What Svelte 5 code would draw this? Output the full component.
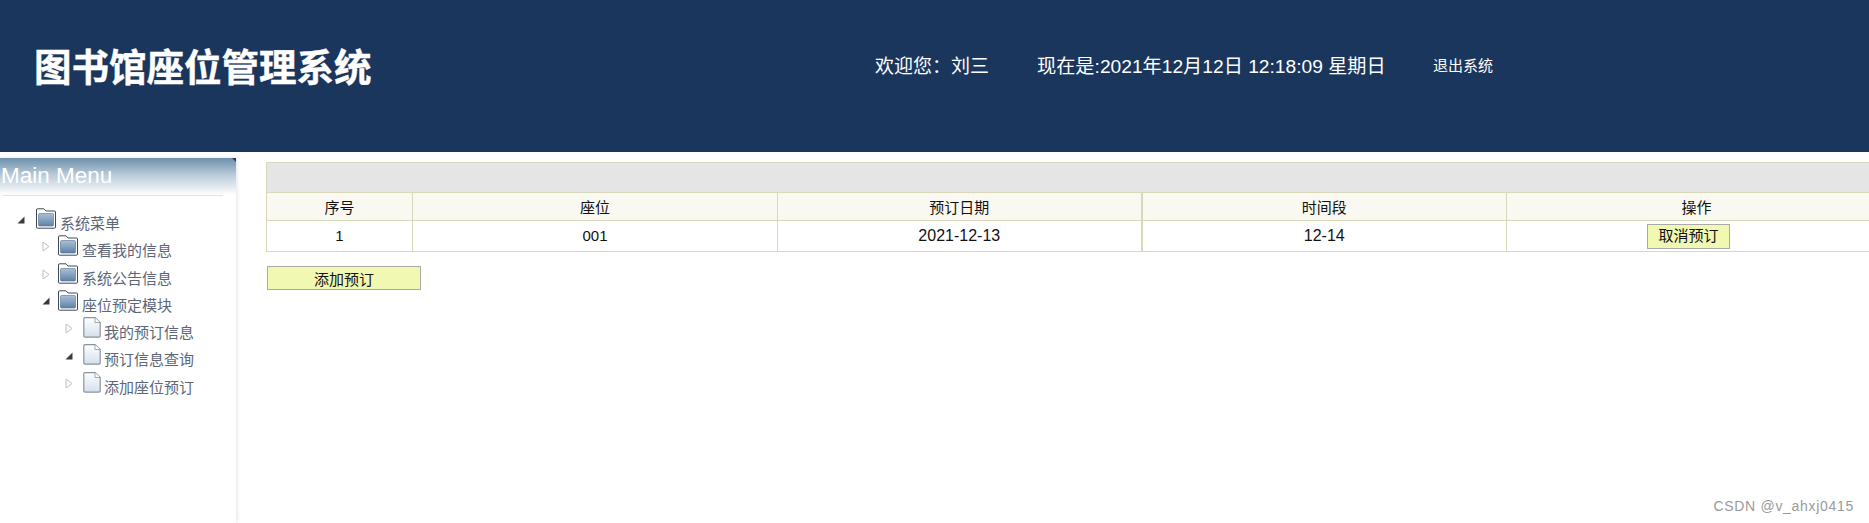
<script>
  const tree = [
    { label: '系统菜单', level: 0, open: true, icon: 'folder' },
    { label: '查看我的信息', level: 1, open: false, icon: 'folder' },
    { label: '系统公告信息', level: 1, open: false, icon: 'folder' },
    { label: '座位预定模块', level: 1, open: true, icon: 'folder' },
    { label: '我的预订信息', level: 2, open: false, icon: 'file' },
    { label: '预订信息查询', level: 2, open: true, icon: 'file' },
    { label: '添加座位预订', level: 2, open: false, icon: 'file' }
  ];

  const columns = ['序号', '座位', '预订日期', '时间段', '操作'];
  const rows = [{ id: 1, seat: '001', date: '2021-12-13', time: '12-14' }];
</script>

<div class="page">
  <header class="top">
    <h1>图书馆座位管理系统</h1>
    <span class="welcome">欢迎您：刘三</span>
    <span class="clock">现在是:2021年12月12日 12:18:09 星期日</span>
    <a class="logout" href="#top">退出系统</a>
  </header>

  <div class="body">
    <aside class="side">
      <div class="side-title">Main Menu</div>
      <div class="rule"></div>
      <ul class="tree">
        {#each tree as node}
          <li class="node level-{node.level}">
            <span class="arrow">
              {#if node.open}
                <svg width="8" height="8" viewBox="0 0 8 8"><path d="M7.5 0.5V7.5H0.5Z" fill="#3a3a3a" /></svg>
              {:else}
                <svg width="8" height="11" viewBox="0 0 8 11"><path d="M1 1L7 5.5L1 10Z" fill="#fff" stroke="#b9bfc6" stroke-width="1" /></svg>
              {/if}
            </span>
            {#if node.icon === 'folder'}
              <svg class="icon" width="20" height="21" viewBox="0 0 20 21">
                <defs>
                  <linearGradient id="fold" x1="0" y1="0" x2="0" y2="1">
                    <stop offset="0" stop-color="#a9c0d8" />
                    <stop offset="1" stop-color="#5f82a8" />
                  </linearGradient>
                </defs>
                <path d="M1.5 20.2Q.5 20.2.5 19V2Q.5.8 1.5.8H8L10 3H18.5Q19.5 3 19.5 4V19Q19.5 20.2 18.5 20.2Z" fill="#fff" stroke="#3d4856" stroke-width="1" />
                <rect x="2.5" y="5.5" width="15" height="12.5" rx="1" fill="url(#fold)" stroke="#5b7088" stroke-width="0.6" />
              </svg>
            {:else}
              <svg class="icon file" width="18" height="21" viewBox="0 0 18 21">
                <defs>
                  <linearGradient id="page" x1="0" y1="0" x2="0" y2="1">
                    <stop offset="0" stop-color="#ffffff" />
                    <stop offset="1" stop-color="#d3dfec" />
                  </linearGradient>
                </defs>
                <path d="M1.8.7H12L17.2 5.5V18.8Q17.2 20.2 15.8 20.2H2.2Q.8 20.2.8 18.8V1.7Q.8.7 1.8.7Z" fill="url(#page)" stroke="#8a94a0" stroke-width="1.2" />
                <path d="M12 .7V5.5H17.2" fill="#fff" stroke="#8a94a0" stroke-width="0.8" />
              </svg>
            {/if}
            <span class="label">{node.label}</span>
          </li>
        {/each}
      </ul>
    </aside>

    <main class="content">
      <table class="grid">
        <colgroup>
          <col class="col-id" />
          <col class="col-wide" />
          <col class="col-mid" />
          <col class="col-wide" />
          <col class="col-last" />
        </colgroup>
        <thead>
          <tr class="band"><th colspan="5"></th></tr>
          <tr class="heads">
            {#each columns as col}
              <th>{col}</th>
            {/each}
          </tr>
        </thead>
        <tbody>
          {#each rows as row}
            <tr>
              <td>{row.id}</td>
              <td>{row.seat}</td>
              <td class="wide-num">{row.date}</td>
              <td class="wide-num">{row.time}</td>
              <td><button class="btn cancel">取消预订</button></td>
            </tr>
          {/each}
        </tbody>
      </table>
      <button class="btn add">添加预订</button>
    </main>
  </div>

  <div class="mark">CSDN @v_ahxj0415</div>
</div>

<style>
  :global(body) {
    margin: 0;
    background: #fff;
    overflow: hidden;
  }

  .page {
    position: relative;
    width: 1869px;
    height: 523px;
    overflow: hidden;
    font-family: "Liberation Sans", "Noto Sans CJK SC", sans-serif;
  }

  .top {
    display: flex;
    align-items: center;
    height: 152px;
    padding: 0 0 23px 34px;
    box-sizing: border-box;
    background: #1a365d;
    color: #fff;
  }

  h1 {
    width: 841px;
    margin: 0;
    font-size: 37.5px;
    font-weight: 700;
    white-space: nowrap;
    -webkit-text-stroke: 0.4px #fff;
  }

  .welcome {
    width: 162px;
    font-size: 19px;
    white-space: nowrap;
  }

  .clock {
    width: 396px;
    font-size: 19.2px;
    white-space: nowrap;
  }

  .logout {
    color: #fff;
    font-size: 15px;
    text-decoration: none;
  }

  .body {
    display: flex;
    height: 371px;
  }

  .side {
    flex: none;
    width: 236px;
    margin-top: 6px;
    box-shadow: 1px 0 4px rgba(190, 195, 210, 0.45);
  }

  .side-title {
    position: relative;
    height: 37px;
    padding-left: 1px;
    background: linear-gradient(#6d90ab, #b8cad8 45%, #fff);
    color: #fff;
    font-size: 22.5px;
    line-height: 36px;
  }

  .side-title::after {
    content: '';
    position: absolute;
    top: 0;
    right: 0;
    border-top: 4px solid #2b3f55;
    border-left: 4px solid transparent;
  }

  .rule {
    height: 1px;
    margin: 0 13px 12px 2px;
    background: #dfe4ea;
  }

  .tree {
    margin: 0;
    padding: 0;
    list-style: none;
  }

  .node {
    display: flex;
    align-items: flex-start;
    height: 27.3px;
    color: #5c6678;
    font-size: 15px;
  }

  .level-0 { padding-left: 17px; }
  .level-1 { padding-left: 42px; }
  .level-2 { padding-left: 65px; }

  .arrow {
    display: flex;
    flex: none;
    align-items: center;
    width: 8px;
    height: 23px;
    margin-right: 11px;
  }

  .level-1 .arrow { margin-right: 8px; }
  .level-2 .arrow { margin-right: 10px; }

  .icon {
    flex: none;
  }

  .label {
    margin: 6px 0 0 4px;
    line-height: 20px;
    white-space: nowrap;
  }

  .file + .label {
    margin-left: 3px;
  }

  .content {
    flex: none;
    width: 1603px;
    margin-left: 30px;
    padding-top: 10px;
    font-size: 15px;
  }

  .grid {
    width: 1620px;
    border-collapse: collapse;
    table-layout: fixed;
    color: #111;
    text-align: center;
  }

  .col-id { width: 146px; }
  .col-wide { width: 365px; }
  .col-mid { width: 364px; }
  .col-last { width: 380px; }

  th,
  td {
    padding: 0;
    border: 1px solid #d9d9ba;
    font-weight: 400;
  }

  th:nth-child(4),
  td:nth-child(4) {
    border-left-width: 2px;
  }

  .band th {
    height: 29px;
    background: #e5e5e5;
  }

  .heads th {
    height: 26px;
    padding-bottom: 1px;
    background: #f9f9f2;
  }

  td {
    height: 30px;
    line-height: 20px;
  }

  .wide-num {
    font-size: 16px;
  }

  .btn {
    border: 1px solid #aaa;
    border-radius: 0;
    background: #f1f8b2;
    color: #111;
    font: inherit;
    font-size: 15px;
    padding: 0;
  }

  .cancel {
    display: block;
    width: 83px;
    height: 25px;
    margin-left: 140px;
  }

  .add {
    display: block;
    width: 154px;
    height: 24px;
    margin: 14px 0 0 1px;
  }

  .mark {
    position: absolute;
    right: 15px;
    bottom: 9px;
    color: #9a9a9a;
    font-size: 14px;
    letter-spacing: 0.7px;
  }
</style>
